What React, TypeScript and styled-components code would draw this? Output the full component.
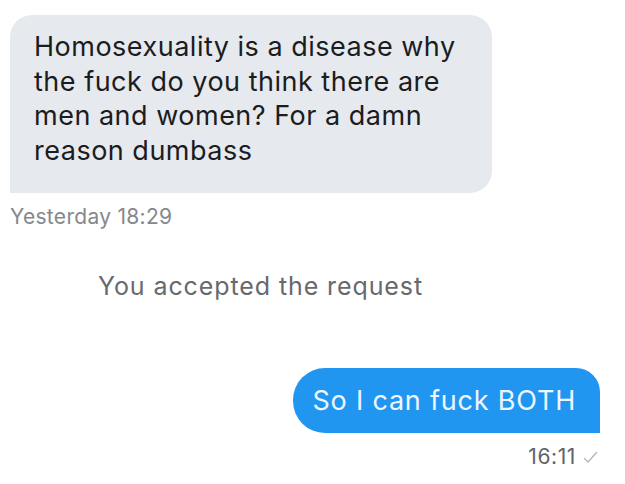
import React from "react";
import styled, { createGlobalStyle } from "styled-components";

const GlobalStyle = createGlobalStyle`
  html, body {
    margin: 0;
    padding: 0;
    background: #ffffff;
  }
  body {
    font-family: Inter, "Liberation Sans", Arial, sans-serif;
    -webkit-font-smoothing: antialiased;
  }
`;

const Page = styled.div`
  width: 625px;
  height: 484px;
  display: flex;
  flex-direction: column;
  box-sizing: border-box;
  padding: 15px 25px 0 10px;
  overflow: hidden;
`;

const IncomingBubble = styled.div`
  width: 482px;
  box-sizing: border-box;
  padding: 15px 14px 25px 24px;
  background: #e6e9ee;
  border-radius: 22px 22px 22px 0;
  color: #1b1c1e;
  font-size: 27px;
  line-height: 34.5px;
  letter-spacing: 0.5px;
`;

const Timestamp = styled.div<{ $align?: "left" | "right" }>`
  display: flex;
  align-items: center;
  justify-content: ${(p) => (p.$align === "right" ? "flex-end" : "flex-start")};
  gap: 7px;
  margin-top: 11px;
  font-size: ${(p) => (p.$align === "right" ? "21px" : "21px")};
  line-height: 26px;
  letter-spacing: ${(p) => (p.$align === "right" ? "0.6px" : "0.3px")};
  color: ${(p) => (p.$align === "right" ? "#5f6266" : "#85888c")};
`;

const SystemNote = styled.div`
  margin-top: 41px;
  padding-left: 88px;
  font-size: 25px;
  line-height: 30px;
  letter-spacing: 0.9px;
  color: #67696c;
`;

const OutgoingRow = styled.div`
  display: flex;
  justify-content: flex-end;
  margin-top: 67px;
`;

const OutgoingBubble = styled.div`
  box-sizing: border-box;
  height: 65px;
  padding: 17px 24px 17px 19px;
  background: #2196f0;
  border-radius: 32px 24px 0 32px;
  color: #eef7ff;
  font-size: 27px;
  line-height: 31px;
  letter-spacing: 0.8px;
  white-space: nowrap;
`;

const Check = styled.svg`
  width: 15px;
  height: 13px;
  margin-right: 2px;
`;

export default function App() {
  return (
    <>
      <GlobalStyle />
      <Page>
        <div>
          <IncomingBubble>
            Homosexuality is a disease why the fuck do you think there are men and women? For a damn reason dumbass
          </IncomingBubble>
          <Timestamp>Yesterday 18:29</Timestamp>
        </div>
        <SystemNote>You accepted the request</SystemNote>
        <OutgoingRow>
          <OutgoingBubble>So I can fuck BOTH</OutgoingBubble>
        </OutgoingRow>
        <Timestamp $align="right">
          16:11
          <Check viewBox="0 0 15 13" aria-hidden="true">
            <polyline points="1.5,7.5 5,11 13.5,1.5" fill="none" stroke="#b4b7bb" strokeWidth="1.4" strokeLinecap="round" strokeLinejoin="round" />
          </Check>
        </Timestamp>
      </Page>
    </>
  );
}
